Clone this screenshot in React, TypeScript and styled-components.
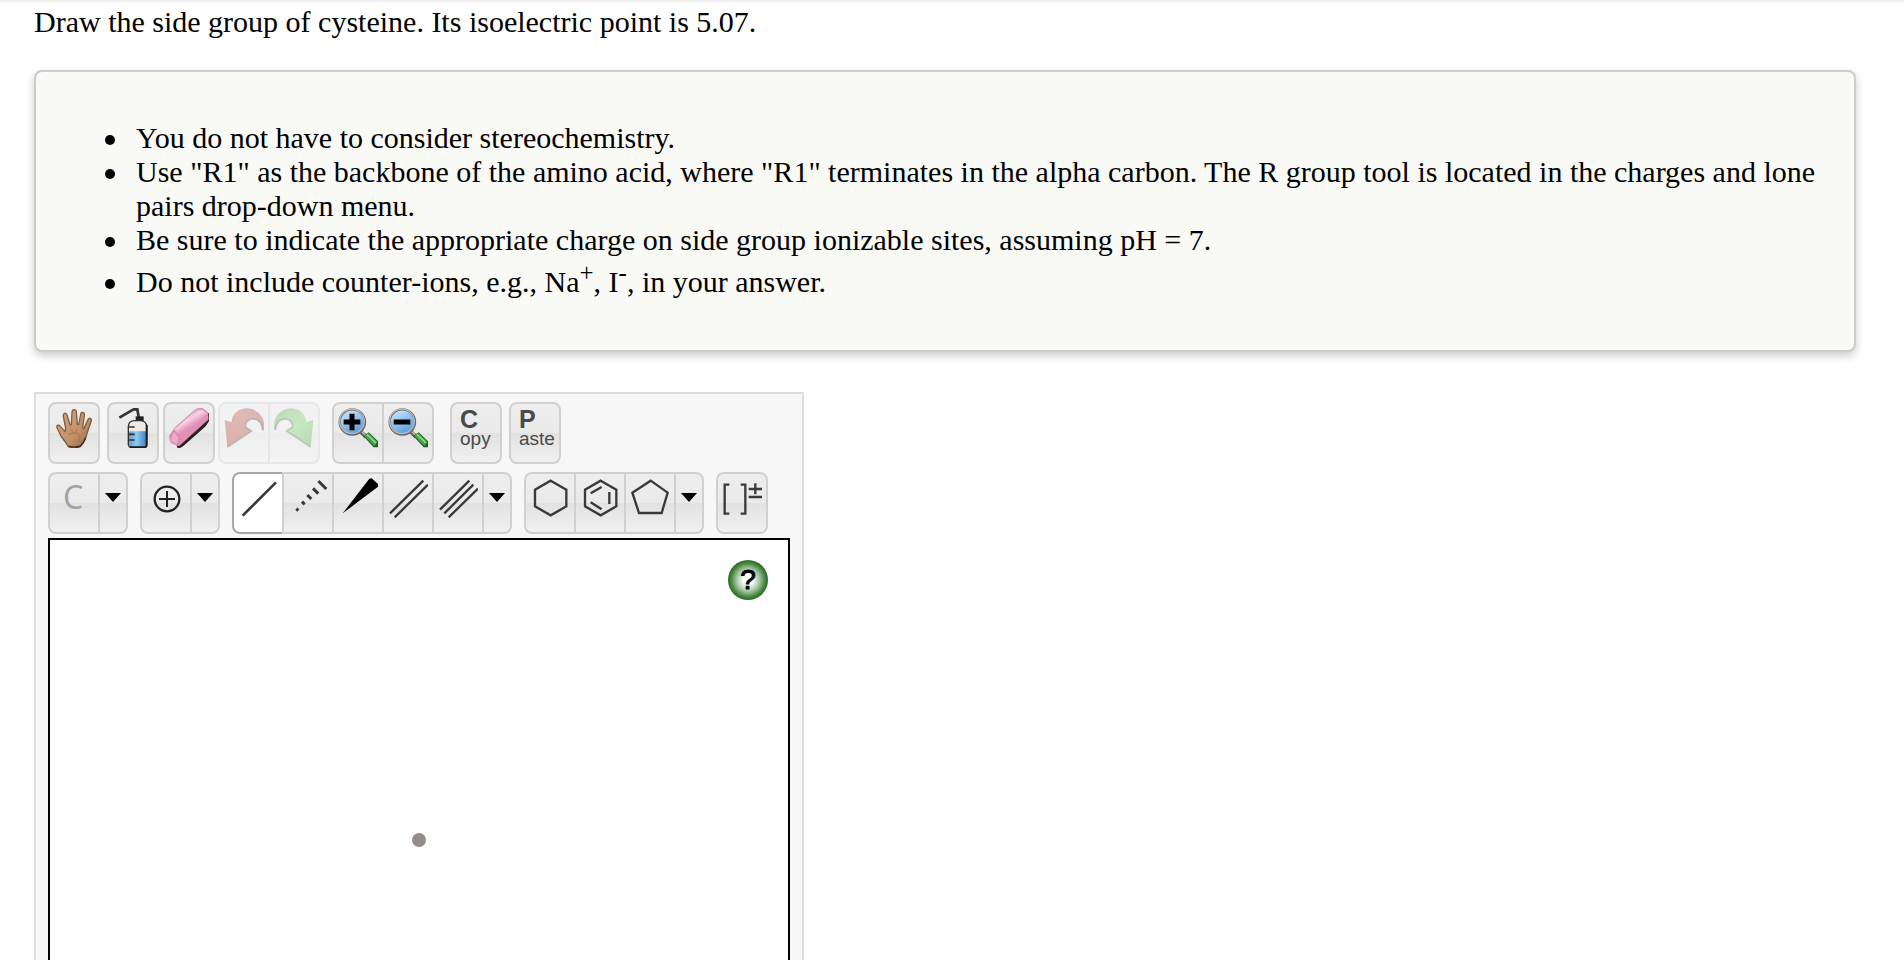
import React from "react";
import styled, { createGlobalStyle, css } from "styled-components";

const GlobalStyle = createGlobalStyle`
  *, *::before, *::after { box-sizing: border-box; }
  html, body { margin: 0; height: 100%; overflow: hidden; background: #fff; }
  body {
    color: #000;
    font-family: "Liberation Serif", "Times New Roman", serif;
    font-size: 30px;
    line-height: 34px;
  }
`;

const Page = styled.main`
  border-top: 2px solid #f0f0f0;
  padding: 3px 48px 0 34px;
`;

const Question = styled.p`
  margin: 0 0 31px;
`;

const Instructions = styled.section`
  margin-bottom: 40px;
  padding: 49px 36px 51px 0;
  border: 2px solid #ccc;
  border-radius: 8px;
  background: #f9faf5;
  box-shadow: 0 4px 8px rgba(0, 0, 0, 0.2);
`;

const InstructionList = styled.ul`
  margin: 0;
  padding-left: 100px;
  list-style: none;

  li::before {
    content: "";
    display: inline-block;
    width: 10px;
    height: 10px;
    margin: 0 21px 0 -31px;
    border-radius: 50%;
    background: #000;
    vertical-align: 3px;
  }

  sup {
    font-size: 25px;
    line-height: 32px;
  }
`;

const Editor = styled.section`
  width: 770px;
  max-width: 100%;
  padding: 8px 12px 12px;
  border: 2px solid #ddd;
  background: #f7f7f7;
`;

const Toolbar = styled.div<{ $below: number }>`
  display: flex;
  margin-bottom: ${(p) => p.$below}px;
`;

const Group = styled.div<{ $before?: number; $disabled?: boolean }>`
  display: flex;
  margin-left: ${(p) => p.$before ?? 0}px;
  opacity: ${(p) => (p.$disabled ? 0.4 : 1)};
`;

const Tool = styled.button<{ $narrow?: boolean; $active?: boolean }>`
  display: block;
  flex: none;
  width: ${(p) => (p.$narrow ? 28 : 50)}px;
  height: 62px;
  margin: 0;
  padding: 4px;
  border: 2px solid #d0d0d0;
  border-right-width: 0;
  background: linear-gradient(#eee 0%, #eaeaea 50%, #e2e2e2 50%, #f0f0f0 100%);
  color: #4a4a4a;
  font-family: "Liberation Sans", Arial, sans-serif;
  text-align: left;

  &:first-child { border-radius: 8px 0 0 8px; }
  &:last-child {
    width: ${(p) => (p.$narrow ? 30 : 52)}px;
    border-right-width: 2px;
    border-radius: 0 8px 8px 0;
  }
  &:only-child { border-radius: 8px; }

  ${(p) =>
    p.$active &&
    css`
      border-color: #a6a6a6;
      background: #fff;
    `}
`;

const Icon = styled.svg`
  display: block;
  width: 40px;
  height: 40px;
  margin-bottom: 12px;
`;

const Caret = styled.svg`
  display: block;
  width: 16px;
  height: 9px;
  margin: 0 auto 12px 1px;
`;

const WordLabel = styled.span`
  display: block;
  height: 52px;
  padding-left: 4px;
  font-size: 19px;
  line-height: 18px;

  b {
    display: block;
    font-size: 25px;
    line-height: 22px;
  }
`;

const AtomLabel = styled.span`
  display: block;
  height: 52px;
  padding-left: 9px;
  color: #a3a3a3;
  font-family: "Noto Sans", sans-serif;
  font-size: 32px;
  line-height: 38px;
`;

const Canvas = styled.div`
  position: relative;
  display: flex;
  align-items: center;
  justify-content: center;
  height: 604px;
  border: 2px solid #000;
  background: #fff;
`;

const Atom = styled.span`
  width: 14px;
  height: 14px;
  border-radius: 50%;
  background: #958b8b;
`;

const Help = styled.button`
  position: absolute;
  top: 20px;
  right: 20px;
  width: 40px;
  height: 40px;
  padding: 0;
  border: 0;
  border-radius: 50%;
  background: radial-gradient(closest-side, #fff 0%, #f8fbf8 25%, #9dc09b 60%, #45853f 85%, #2a6e22 100%);
  color: #000;
  font-family: "Liberation Sans", Arial, sans-serif;
  font-size: 28px;
  line-height: 40px;
  text-align: center;
  -webkit-text-stroke: 1px #000;
`;

const Art = ({ children }: { children: React.ReactNode }) => (
  <Icon viewBox="0 0 120 120" aria-hidden="true">
    {children}
  </Icon>
);

const Lines = ({ d, width = 7 }: { d: string; width?: number }) => (
  <Art>
    <path d={d} fill="none" stroke="#3a3a3a" strokeWidth={width} />
  </Art>
);

const DropDown = ({ label }: { label: string }) => (
  <Tool $narrow aria-label={label}>
    <Caret viewBox="0 0 16 9" aria-hidden="true">
      <path d="M0 0h16L8 9z" fill="#000" />
    </Caret>
  </Tool>
);

const Hand = () => (
  <Art>
    <defs>
      <linearGradient id="skin" x1="0" y1="0" x2="1" y2="1">
        <stop offset="0" stopColor="#d6a67d" />
        <stop offset="0.6" stopColor="#c39068" />
        <stop offset="1" stopColor="#8a5f40" />
      </linearGradient>
    </defs>
    <path
      d="M40 112C34 99 28 95 22 86L9 59C7 51 14 49 19 55L33 71L35 61L28 25C27 15 36 12 39 21L48 51L52 50L54 13C54 3 66 2 67 12L70 49L74 50L80 19C82 9 93 12 91 23L86 58L89 63L101 37C105 26 115 31 111 41L99 76C96 94 89 104 79 116Q60 123 43 116Z"
      fill="url(#skin)"
      stroke="#7d5f48"
      strokeWidth="4"
      strokeLinejoin="round"
    />
    <path d="M43 80Q58 70 72 77Q81 83 76 98M49 64L58 72M69 63L65 73" fill="none" stroke="#a8714a" strokeWidth="3" />
    <path d="M43 114Q60 121 79 114Q90 103 95 89" fill="none" stroke="#3c2819" strokeWidth="4" />
  </Art>
);

const Bottle = () => (
  <Art>
    <defs>
      <linearGradient id="liquid">
        <stop offset="0" stopColor="#5a9fd8" />
        <stop offset="0.45" stopColor="#8ecbf4" />
        <stop offset="1" stopColor="#3f84c4" />
      </linearGradient>
    </defs>
    <path d="M19 29L62 4H73L77 28" fill="none" stroke="#333" strokeWidth="8" />
    <path d="M68 25H92V40H68Z" fill="#222" />
    <path d="M46 55Q48 38 64 38H84Q99 39 101 54V110Q101 117 94 118H53Q47 117 46 110Z" fill="#eee9e4" />
    <path d="M47 70H99V108Q98 115 91 116H55Q48 114 47 108Z" fill="url(#liquid)" />
    <path d="M46 55Q48 38 64 38H84Q99 39 101 54V110Q101 117 94 118H53Q47 117 46 110Z" fill="none" stroke="#333" strokeWidth="4" />
    <path d="M101 50V110Q101 117 94 118H50" fill="none" stroke="#1c1c1c" strokeWidth="6" />
    <path d="M46 57H65M46 79H65M46 96H65" stroke="#333" strokeWidth="5" />
  </Art>
);

const Eraser = () => (
  <Art>
    <defs>
      <linearGradient id="rubber" x1="0.2" y1="0.1" x2="0.7" y2="0.8">
        <stop offset="0.15" stopColor="#e59cc0" />
        <stop offset="0.4" stopColor="#f7d3e4" />
        <stop offset="0.7" stopColor="#e591b9" />
      </linearGradient>
    </defs>
    <path d="M25 113L118 35L119 16L120 36L108 54L40 114L28 120Z" fill="#2e1d25" stroke="#2e1d25" strokeWidth="4" />
    <path d="M2 84L18 59L79 5Q88 0 99 1L116 13L118 34L30 114L8 105Q1 98 2 84Z" fill="#e79bc0" stroke="#b9809c" strokeWidth="2" />
    <path d="M16 64L82 6L98 5L113 16L34 88Z" fill="url(#rubber)" />
    <path d="M14 67L33 88L27 111M4 88L15 67" fill="none" stroke="#c9839f" strokeWidth="3" />
    <path d="M34 88L115 19V34L31 111Z" fill="#e08fb5" />
    <path d="M9 83L16 74L27 89L22 105L10 100Z" fill="#efacc9" />
  </Art>
);

const arrowShape = "M2 36L23 43C24 16 44 1 70 1C96 2 117 22 120 45V68L113 65C113 43 101 32 85 32C71 33 63 46 64 57L82 69L10 118Z";
const arrowShade = "M117 65C113 40 101 32 85 32C71 33 63 46 64 57L82 69L10 117";

const Undo = () => (
  <Art>
    <defs>
      <linearGradient id="undo" x1="0" y1="1" x2="1" y2="0">
        <stop offset="0" stopColor="#b8443a" />
        <stop offset="0.65" stopColor="#bf5c52" />
        <stop offset="1" stopColor="#945048" />
      </linearGradient>
    </defs>
    <path d={arrowShape} fill="url(#undo)" />
    <path d={arrowShade} fill="none" stroke="#4c3f3d" strokeWidth="6" opacity="0.7" />
  </Art>
);

const Redo = () => (
  <Art>
    <defs>
      <linearGradient id="redo" x1="0" y1="1" x2="1" y2="0">
        <stop offset="0" stopColor="#54a84c" />
        <stop offset="0.5" stopColor="#86d474" />
        <stop offset="1" stopColor="#68a85f" />
      </linearGradient>
    </defs>
    <g transform="translate(120 0) scale(-1 1)">
      <path d={arrowShape} fill="url(#redo)" />
      <path d={arrowShade} fill="none" stroke="#3d5838" strokeWidth="6" opacity="0.6" />
    </g>
  </Art>
);

const Magnifier = ({ id, plus }: { id: string; plus?: boolean }) => (
  <Art>
    <defs>
      <linearGradient id={id} x1="0" y1="0" x2="0.5" y2="1">
        <stop offset="0" stopColor="#e2f0fc" />
        <stop offset="0.5" stopColor="#98c6ef" />
        <stop offset="1" stopColor="#5c9fdd" />
      </linearGradient>
    </defs>
    <path d="M67 70L85 87" stroke="#5e5e5e" strokeWidth="12" />
    <path d="M69 69L86 85" stroke="#c9c9c9" strokeWidth="4" />
    <path d="M76 84L92 73L120 100V118H107Z" fill="#1e5f24" />
    <path d="M79 84L91 74L118 101L110 115Z" fill="#42a443" />
    <path d="M87 80L114 105" stroke="#91d784" strokeWidth="5" />
    <circle cx="43" cy="42" r="38" fill={`url(#${id})`} stroke="#666" strokeWidth="7" />
    <circle cx="42" cy="40" r="37" fill="none" stroke="#bcbcbc" strokeWidth="4" />
    <path d={plus ? "M17 42H67M42 17V67" : "M17 42H67"} stroke="#000" strokeWidth="15" />
  </Art>
);

export default function App() {
  return (
    <>
      <GlobalStyle />
      <Page>
        <Question>Draw the side group of cysteine. Its isoelectric point is 5.07.</Question>
        <Instructions>
          <InstructionList>
            <li>You do not have to consider stereochemistry.</li>
            <li>
              Use "R1" as the backbone of the amino acid, where "R1" terminates in the alpha carbon. The R group tool
              is located in the charges and lone pairs drop-down menu.
            </li>
            <li>Be sure to indicate the appropriate charge on side group ionizable sites, assuming pH = 7.</li>
            <li>
              Do not include counter-ions, e.g., Na<sup>+</sup>, I<sup>-</sup>, in your answer.
            </li>
          </InstructionList>
        </Instructions>

        <Editor>
          <Toolbar $below={8}>
            <Group>
              <Tool aria-label="Move"><Hand /></Tool>
            </Group>
            <Group $before={7}>
              <Tool aria-label="Clean up"><Bottle /></Tool>
            </Group>
            <Group $before={4}>
              <Tool aria-label="Erase"><Eraser /></Tool>
            </Group>
            <Group $before={3} $disabled>
              <Tool aria-label="Undo" disabled><Undo /></Tool>
              <Tool aria-label="Redo" disabled><Redo /></Tool>
            </Group>
            <Group $before={12}>
              <Tool aria-label="Zoom in"><Magnifier id="lens-in" plus /></Tool>
              <Tool aria-label="Zoom out"><Magnifier id="lens-out" /></Tool>
            </Group>
            <Group $before={16}>
              <Tool aria-label="Copy"><WordLabel><b>C</b>opy</WordLabel></Tool>
            </Group>
            <Group $before={7}>
              <Tool aria-label="Paste"><WordLabel><b>P</b>aste</WordLabel></Tool>
            </Group>
          </Toolbar>

          <Toolbar $below={4}>
            <Group>
              <Tool aria-label="Carbon"><AtomLabel>C</AtomLabel></Tool>
              <DropDown label="More elements" />
            </Group>
            <Group $before={12}>
              <Tool aria-label="Positive charge">
                <Art>
                  <circle cx="63" cy="63" r="37" fill="none" stroke="#222" strokeWidth="7" />
                  <path d="M39 63H87M63 39V87" stroke="#222" strokeWidth="6" />
                </Art>
              </Tool>
              <DropDown label="More charges" />
            </Group>
            <Group $before={12}>
              <Tool $active aria-label="Single bond">
                <Lines d="M14 113L114 13" width={8} />
              </Tool>
              <Tool aria-label="Hashed bond">
                <Lines d="M25 92L31 98M42 71L50 79M58 51L70 63M75 31L91 47M91 9L115 33" width={9} />
              </Tool>
              <Tool aria-label="Wedge bond">
                <Art><path d="M14 106L94 2L101 1L120 18V26Z" fill="#000" /></Art>
              </Tool>
              <Tool aria-label="Double bond">
                <Lines d="M6 106L106 8M20 118L120 20" />
              </Tool>
              <Tool aria-label="Triple bond">
                <Lines d="M6 95L94 8M19 106L106 20M32 118L120 32" />
              </Tool>
              <DropDown label="More bonds" />
            </Group>
            <Group $before={12}>
              <Tool aria-label="Cyclohexane">
                <Lines d="M62 8L109 35V85L62 112L15 85V35Z" />
              </Tool>
              <Tool aria-label="Benzene">
                <Lines d="M62 8L109 35V85L62 112L15 85V35ZM32 46L65 27M88 42V78M32 73L65 94" />
              </Tool>
              <Tool aria-label="Cyclopentane">
                <Lines d="M62 8L113 44L95 105H27L7 44Z" />
              </Tool>
              <DropDown label="More rings" />
            </Group>
            <Group $before={12}>
              <Tool aria-label="Brackets and charge">
                <Lines d="M22 20H8V107H22M56 20H70V107H56M80 33H120M100 16V49M80 57H120" />
              </Tool>
            </Group>
          </Toolbar>

          <Canvas>
            <Atom />
            <Help aria-label="Help">?</Help>
          </Canvas>
        </Editor>
      </Page>
    </>
  );
}
